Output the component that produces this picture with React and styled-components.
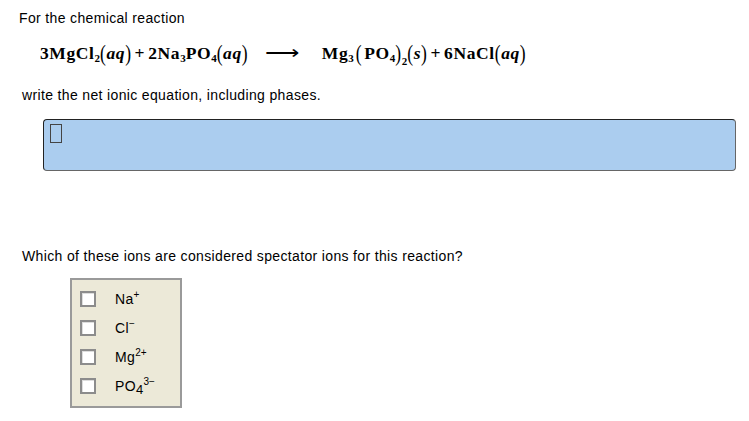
import React from 'react';
import styled, { createGlobalStyle } from 'styled-components';

const Global = createGlobalStyle`
  body {
    margin: 0;
    background: #fff;
    font-family: "Liberation Sans", Arial, sans-serif;
    font-size: 14px;
    letter-spacing: 0.35px;
    color: #000;
  }
`

const Page = styled.div`
  padding: 10px 0 0 19px;
  width: 749px;
  height: 421px;
  box-sizing: border-box;
`
const Line = styled.p`
  margin: 0;
  line-height: 16px;
  padding-left: ${p => p.indent || 0}px;
`
const Equation = styled.div`
  display: flex;
  align-items: baseline;
  margin: 15px 0 0 21px;
  font-family: "Liberation Serif", "Times New Roman", serif;
  font-weight: bold;
  font-size: 17.5px;
  letter-spacing: 0.6px;
  line-height: 22px;
  white-space: nowrap;
`
const Sub = styled.sub`
  font-size: 11px;
  vertical-align: ${p => p.low ? -6 : -3}px;
  line-height: 0;
  letter-spacing: 0;
`
const Paren = styled.span`
  display: inline-block;
  font-weight: normal;
  transform: scaleY(1.3);
  margin: 0 ${p => p.gap || 0}px;
`
const Phase = styled.i`
  font-weight: bold;
`
const Op = styled.span`
  margin: 0 3px;
`
const Arrow = styled.span`
  font-weight: normal;
  font-size: 20px;
  transform: scaleX(1.2);
  display: inline-block;
  margin: 0 24px 0 20px;
`
const AnswerBox = styled.div`
  margin: 16px 0 0 24px;
  width: 693px;
  height: 52px;
  box-sizing: border-box;
  background: #abcdef;
  border: 1px solid #666;
  border-top-color: #222;
  border-left-color: #222;
  border-radius: 4px;
  padding: 4px 6px;
`
const Cursor = styled.div`
  width: 12px;
  height: 19px;
  box-sizing: border-box;
  border: 1px solid #444;
`
const Question = styled(Line)`
  margin-top: 77px;
`
const Choices = styled.div`
  margin: 14px 0 0 51px;
  width: 112px;
  box-sizing: border-box;
  background: #ece9d8;
  border: 2px solid #9a9a9a;
  padding: 11px 0 12px 8px;
  display: flex;
  flex-direction: column;
  gap: 13px;
`
const Choice = styled.label`
  display: flex;
  align-items: center;
  gap: 19px;
  height: 16px;
`
const Box = styled.span`
  width: 16px;
  height: 16px;
  box-sizing: border-box;
  background: #fff;
  border: 2px solid #8c8c8c;
  box-shadow: inset 1px 1px 0 #ddd;
`
const Sup = styled.sup`
  font-size: 10px;
  vertical-align: 6px;
  line-height: 0;
  letter-spacing: 0;
`
const ISub = styled.sub`
  font-size: 13px;
  vertical-align: -3px;
  line-height: 0;
`

const options = [
  <>Na<Sup>+</Sup></>,
  <>Cl<Sup>−</Sup></>,
  <>Mg<Sup>2+</Sup></>,
  <>PO<ISub>4</ISub><Sup>3−</Sup></>,
]

export default function App() {
  return (
    <Page>
      <Global />
      <Line>For the chemical reaction</Line>
      <Equation>
        <span>3MgCl<Sub>2</Sub></span>
        <Paren>(</Paren><Phase>aq</Phase><Paren>)</Paren>
        <Op>+</Op>
        <span>2Na<Sub>3</Sub>PO<Sub>4</Sub></span>
        <Paren>(</Paren><Phase>aq</Phase><Paren>)</Paren>
        <Arrow>⟶</Arrow>
        <span>Mg<Sub>3</Sub></span>
        <Paren gap={2}>(</Paren>
        <span>PO<Sub>4</Sub></span>
        <Paren>)</Paren>
        <span><Sub low>2</Sub></span>
        <Paren>(</Paren><Phase>s</Phase><Paren>)</Paren>
        <Op>+</Op>
        <span>6NaCl</span>
        <Paren>(</Paren><Phase>aq</Phase><Paren>)</Paren>
      </Equation>
      <Line indent={3} style={{ marginTop: 23 }}>write the net ionic equation, including phases.</Line>
      <AnswerBox>
        <Cursor />
      </AnswerBox>
      <Question indent={3}>Which of these ions are considered spectator ions for this reaction?</Question>
      <Choices>
        {options.map((o, i) => (
          <Choice key={i}>
            <Box />
            <span>{o}</span>
          </Choice>
        ))}
      </Choices>
    </Page>
  );
}
